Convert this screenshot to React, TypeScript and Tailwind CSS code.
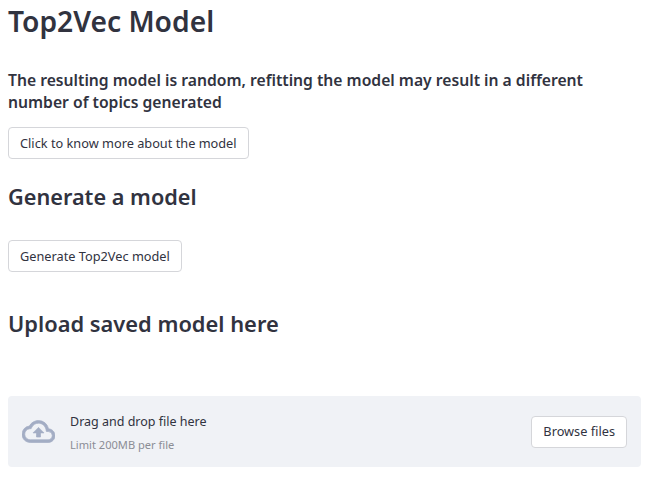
import { ReactNode } from "react";

function Btn({ children }: { children: ReactNode }) {
  return (
    <button className="h-[32px] rounded-[4px] border border-[#d5d6da] bg-white px-[11px] pt-[1px] text-[12.76px] text-[#31333f]">
      {children}
    </button>
  );
}

export default function App() {
  return (
    <div className="h-[483px] w-[653px] overflow-hidden bg-white pl-2 pr-3 text-[#31333f] font-['Noto_Sans',sans-serif]">
      <h1 className="text-[28.2px] leading-[42px] font-semibold">Top2Vec Model</h1>
      <p className="mt-[27px] text-[15.7px] leading-[22px] font-semibold">
        The resulting model is random, refitting the model may result in a different number of topics generated
      </p>
      <div className="mt-[14px]">
        <Btn>Click to know more about the model</Btn>
      </div>
      <h2 className="mt-[22px] text-[21.7px] leading-[32px] font-semibold">Generate a model</h2>
      <div className="mt-[27px]">
        <Btn>Generate Top2Vec model</Btn>
      </div>
      <h2 className="mt-[36px] text-[21.85px] leading-[32px] font-semibold">Upload saved model here</h2>
      <div className="mt-[56px] flex h-[71px] items-center rounded-[4px] bg-[#f0f2f6] pl-[14px] pr-[13px]">
        <svg width="33" height="33" viewBox="0 0 24 24" fill="#a3adc4" stroke="#a3adc4" strokeWidth="0.5" className="shrink-0">
          <path d="M19.35 10.04A7.49 7.49 0 0 0 12 4C9.11 4 6.6 5.64 5.35 8.04A5.994 5.994 0 0 0 0 14c0 3.31 2.69 6 6 6h13c2.76 0 5-2.24 5-5 0-2.64-2.05-4.78-4.65-4.96zM19 18H6c-2.21 0-4-1.79-4-4 0-2.05 1.53-3.76 3.56-3.97l1.07-.11.5-.95A5.469 5.469 0 0 1 12 6c2.62 0 4.88 1.86 5.39 4.43l.3 1.5 1.53.11A2.98 2.98 0 0 1 22 15c0 1.65-1.35 3-3 3zM8 13h2.55v3h2.9v-3H16l-4-4z" />
        </svg>
        <div className="ml-[15px] flex flex-col pt-[1px]">
          <span className="text-[12.5px] leading-[20px]">Drag and drop file here</span>
          <span className="mt-[5px] text-[11.1px] leading-[16px] text-[#8b8d95]">Limit 200MB per file</span>
        </div>
        <div className="ml-auto mr-[1px]">
          <Btn>Browse files</Btn>
        </div>
      </div>
    </div>
  );
}
